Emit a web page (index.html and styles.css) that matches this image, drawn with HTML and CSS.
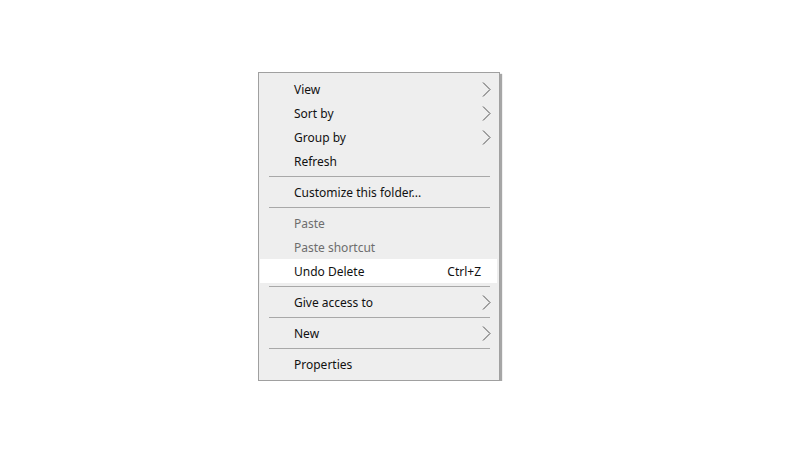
FILE: index.html
```html
<!DOCTYPE html>
<html>
<head>
<meta charset="utf-8">
<link rel="stylesheet" href="styles.css">
</head>
<body>
<div class="stage">
  <div class="menu">
    <div class="item"><span class="label">View</span><svg class="chev" width="9" height="15" viewBox="0 0 9 15"><path d="M1 0.5 L8 7.5 L1 14.5" /></svg></div>
    <div class="item"><span class="label">Sort by</span><svg class="chev" width="9" height="15" viewBox="0 0 9 15"><path d="M1 0.5 L8 7.5 L1 14.5" /></svg></div>
    <div class="item"><span class="label">Group by</span><svg class="chev" width="9" height="15" viewBox="0 0 9 15"><path d="M1 0.5 L8 7.5 L1 14.5" /></svg></div>
    <div class="item"><span class="label">Refresh</span></div>
    <div class="sep"></div>
    <div class="item"><span class="label">Customize this folder...</span></div>
    <div class="sep"></div>
    <div class="item disabled"><span class="label">Paste</span></div>
    <div class="item disabled"><span class="label">Paste shortcut</span></div>
    <div class="item hover"><span class="label">Undo Delete</span><span class="shortcut">Ctrl+Z</span></div>
    <div class="sep"></div>
    <div class="item"><span class="label">Give access to</span><svg class="chev" width="9" height="15" viewBox="0 0 9 15"><path d="M1 0.5 L8 7.5 L1 14.5" /></svg></div>
    <div class="sep"></div>
    <div class="item"><span class="label">New</span><svg class="chev" width="9" height="15" viewBox="0 0 9 15"><path d="M1 0.5 L8 7.5 L1 14.5" /></svg></div>
    <div class="sep"></div>
    <div class="item"><span class="label">Properties</span></div>
  </div>
</div>
</body>
</html>
```
FILE: styles.css
```css
html, body {
  margin: 0;
  padding: 0;
  background: #ffffff;
}
.stage {
  padding: 72px 0 0 258px;
}
.menu {
  width: 237px;
  background: #eeeeee;
  border: 1px solid #a0a0a0;
  padding: 4px 2px 4px 1px;
  box-shadow: 2px 2px 1px rgba(0, 0, 0, 0.35);
  font-family: "Noto Sans", "Open Sans", sans-serif;
  font-size: 12px;
  color: #111111;
}
.item {
  height: 24px;
  display: flex;
  align-items: center;
  padding: 0 8px 0 34px;
}
.item .label {
  flex: 1;
}
.item.disabled {
  color: #6d6d6d;
}
.item.hover {
  background: #ffffff;
}
.shortcut {
  padding-right: 8px;
}
.chev {
  display: block;
  margin-right: -2px;
}
.chev path {
  fill: none;
  stroke: #505050;
  stroke-width: 1;
}
.sep {
  height: 7px;
  display: flex;
  align-items: center;
  padding: 0 7px 0 9px;
}
.sep::before {
  content: "";
  display: block;
  flex: 1;
  height: 1px;
  background: #a8a8a8;
}
```
